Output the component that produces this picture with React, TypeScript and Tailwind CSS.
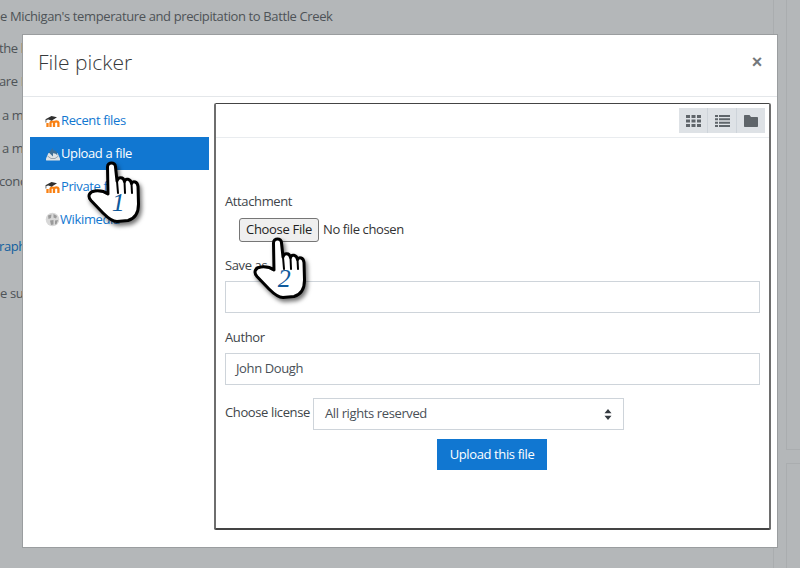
import React from "react";

function Hand({ n, cls }: { n: string; cls: string }) {
  return (
    <div className={`absolute w-[60px] h-[70px] ${cls}`}>
      <svg width="60" height="70" viewBox="0 0 60 70" className="drop-shadow-[2px_3px_2px_rgba(0,0,0,0.55)]">
        <path
          d="M22.5 12C22.5 6.5 30.5 6.5 30.5 12L32 26C33 21.5 38.5 21.5 39.5 26.5C40.5 23 45.5 23.5 46.5 28.5C48 25.5 52.5 26.5 53 31.5L53.5 49C53.5 57 50 63.5 43 65.5L32 66.5C27 66.5 22 62 18 58L6 45.5C2 41 4.5 36.5 10 36C15 35.5 19.5 36.5 23 39Z"
          fill="#fff"
          stroke="#000"
          strokeWidth="3"
          strokeLinejoin="round"
        />
        <path d="M32 26L33 38M39.5 26.5L40 38M46.5 28.5L47 38" fill="none" stroke="#000" strokeWidth="2" strokeLinecap="round" />
      </svg>
      <span className="absolute left-[24px] top-[32px] w-[18px] text-center font-['Liberation_Serif',serif] italic text-[26px] leading-[32px] text-[#0f5a9c]">
        {n}
      </span>
    </div>
  );
}

function MoodleIcon() {
  return (
    <svg width="16" height="14" viewBox="0 0 16 14" className="shrink-0">
      <path d="M2.5 13V9M5.5 13V8.6C5.5 7.6 8.5 7 9 8.4V13M9 8.6C9.6 7 13 7 13.4 8.6V13" fill="none" stroke="#f98012" strokeWidth="2.3" />
      <path d="M0.5 5.2L6.5 2L12 3.2L6.5 6.8L3.6 5.6L1 6Z" fill="#2f2f2f" />
      <path d="M1 5.5L0.9 8.5" stroke="#444" strokeWidth="0.8" fill="none" />
    </svg>
  );
}

function UploadIcon() {
  return (
    <svg width="16" height="14" viewBox="0 0 16 14" className="shrink-0">
      <path d="M3.5 6L1 11.5V13C1 13.4 1.4 13.6 2 13.6H14C14.6 13.6 15 13.4 15 13V11.5L12.5 6Z" fill="#dfe3e6" />
      <path d="M2.5 9L6 11.5H10L13.5 9" fill="none" stroke="#9aa4ad" strokeWidth="1" />
      <path d="M3.8 5.6L7.8 1L8 3.2C10.8 3.2 12.6 5 12.4 8.6C11.2 6.8 9.8 6.2 8 6.3L8 9.4Z" fill="#3f6f96" />
    </svg>
  );
}

function GlobeIcon() {
  return (
    <svg width="15" height="15" viewBox="0 0 15 15" className="shrink-0">
      <circle cx="7.5" cy="7.5" r="6.8" fill="#d8d8d8" />
      <path d="M3 3.5L6.5 2.5L6 6L3.5 7ZM8.5 2L12 4L11 6.5L8.5 5.5ZM5 8.5L8.5 8L8.5 12.5L6 13ZM10 8.5L13 8L11.5 12L10 12.5Z" fill="#9a9a9a" />
    </svg>
  );
}

const rows: [string, string][] = [
  ["e Michigan's temperature and precipitation to Battle Creek", "h-[32px] text-[#4e5357]"],
  ["the lakes", "h-[33px] text-[#4e5357] -ml-px"],
  ["are Michigan", "h-[34px] text-[#4e5357] -ml-px"],
  ["a map", "h-[33px] text-[#4e5357] ml-[2px]"],
  ["a map", "h-[33px] text-[#4e5357] ml-[2px]"],
  ["conclusion", "h-[65px] text-[#4e5357] -ml-px"],
  ["raph", "h-[47px] text-[#0f5f9f] -ml-[1px]"],
  ["e submit", "h-[33px] text-[#4e5357]"],
];

export default function App() {
  return (
    <div className="relative w-[800px] h-[568px] overflow-hidden bg-[#b4b7b9] font-['Open_Sans',sans-serif] text-[13px] tracking-[-0.38px] text-[#40454a]">
      <div className="flex h-full">
        <div className="w-[774px] border-r border-[#aaadaf] pt-[7px] shrink-0">
          {rows.map(([t, c], i) => (
            <div key={i} className={`leading-[18px] whitespace-nowrap ${c}`}>{t}</div>
          ))}
        </div>
        <div className="ml-[12px] flex-1 flex flex-col">
          <div className="h-[450px] border-l border-b border-[#aaadaf]" />
          <div className="mt-[13px] flex-1 border-l border-t border-[#aaadaf]" />
        </div>
      </div>

      <div className="absolute left-[22px] top-[34px] w-[756px] h-[514px] bg-white border border-[#9a9d9f] flex flex-col">
        <div className="h-[62px] shrink-0 flex items-center justify-between pl-[15px] pr-[15px] border-b border-[#e4e7ea]">
          <h2 className="font-['Open_Sans',sans-serif] font-light text-[21px] tracking-[0px] text-[#373a3c] leading-none -mt-[6px]">File picker</h2>
          <span className="text-[18px] font-bold leading-none text-[#74787b] -mt-[8px] font-['Liberation_Sans',sans-serif]">×</span>
        </div>
        <div className="flex-1 flex pt-[6px] pl-[7px]">
          <div className="w-[179px] shrink-0 pt-[1px]">
            <div className="h-[33px] flex items-center pl-[15px] text-[#1177d1]"><MoodleIcon /><span className="mt-[1px]">Recent files</span></div>
            <div className="h-[33px] flex items-center pl-[15px] bg-[#1177d1] text-white"><UploadIcon /><span className="mt-[1px]">Upload a file</span></div>
            <div className="h-[33px] flex items-center pl-[15px] text-[#1177d1]"><MoodleIcon /><span className="mt-[1px]">Private files</span></div>
            <div className="h-[33px] flex items-center pl-[15px] text-[#1177d1]"><GlobeIcon /><span className="mt-[1px]">Wikimedia</span></div>
          </div>
          <div className="ml-[5px] w-[557px] h-[427px] border-l-2 border-l-[#6e6e6e] border-r-2 border-r-[#6e6e6e] border-t border-t-[#444] border-b-2 border-b-[#444] rounded-[2px] flex flex-col">
            <div className="h-[34px] shrink-0 border-b border-[#e9ecef] flex justify-end pt-[4px] pr-[4px]">
              <div className="flex h-[25px] bg-[#dee2e6]">
                <div className="w-[29px] flex items-center justify-center border-r border-[#ced4da]">
                  <svg width="15" height="12" viewBox="0 0 15 12" fill="#5f656a"><path d="M0 0h4v3H0zM5.5 0h4v3h-4zM11 0h4v3h-4zM0 4.5h4v3H0zM5.5 4.5h4v3h-4zM11 4.5h4v3h-4zM0 9h4v3H0zM5.5 9h4v3h-4zM11 9h4v3h-4z" /></svg>
                </div>
                <div className="w-[29px] flex items-center justify-center border-r border-[#ced4da]">
                  <svg width="15" height="12" viewBox="0 0 15 12" fill="#5f656a"><path d="M0 0h3v2H0zM4 0h11v2H4zM0 3.3h3v2H0zM4 3.3h11v2H4zM0 6.7h3v2H0zM4 6.7h11v2H4zM0 10h3v2H0zM4 10h11v2H4z" /></svg>
                </div>
                <div className="w-[28px] flex items-center justify-center">
                  <svg width="14" height="12" viewBox="0 0 14 12" fill="#5f656a"><path d="M1 0h4.5l1.5 2h6c.6 0 1 .4 1 1v8c0 .6-.4 1-1 1H1c-.6 0-1-.4-1-1V1c0-.6.4-1 1-1z" /></svg>
                </div>
              </div>
            </div>
            <div className="flex-1 px-[9px] pt-[53px]">
              <div className="leading-[20px] h-[20px]">Attachment</div>
              <div className="flex items-center mt-[7px] ml-[14px] h-[23px]">
                <button className="w-[80px] h-[24px] bg-[#efefef] border border-[#767676] rounded-[3px] text-[#222] text-[13px] tracking-[-0.3px]">Choose File</button>
                <span className="ml-[4px] text-[#333]">No file chosen</span>
              </div>
              <div className="mt-[14px] leading-[20px] h-[20px]">Save as</div>
              <div className="mt-[6px] h-[32px] border border-[#ced4da]" />
              <div className="mt-[14px] leading-[20px] h-[20px]">Author</div>
              <div className="mt-[6px] h-[32px] border border-[#ced4da] flex items-center pl-[10px] text-[#495057]">John Dough</div>
              <div className="mt-[13px] flex items-start">
                <span className="mt-[4px] leading-[20px] w-[88px] shrink-0 whitespace-nowrap">Choose license</span>
                <div className="w-[311px] h-[32px] border border-[#ced4da] flex items-center justify-between pl-[11px] pr-[11px] text-[#495057]">
                  <span>All rights reserved</span>
                  <svg width="8" height="11" viewBox="0 0 8 11" fill="#343a40"><path d="M4 0L7.5 4.2H.5zM4 11L.5 6.8h7z" /></svg>
                </div>
              </div>
              <div className="mt-[9px] ml-[212px] w-[110px] h-[31px] bg-[#1177d1] text-white flex items-center justify-center">Upload this file</div>
            </div>
          </div>
        </div>
      </div>

      <Hand n="1" cls="left-[85px] top-[155px]" />
      <Hand n="2" cls="left-[251px] top-[231px]" />
    </div>
  );
}
